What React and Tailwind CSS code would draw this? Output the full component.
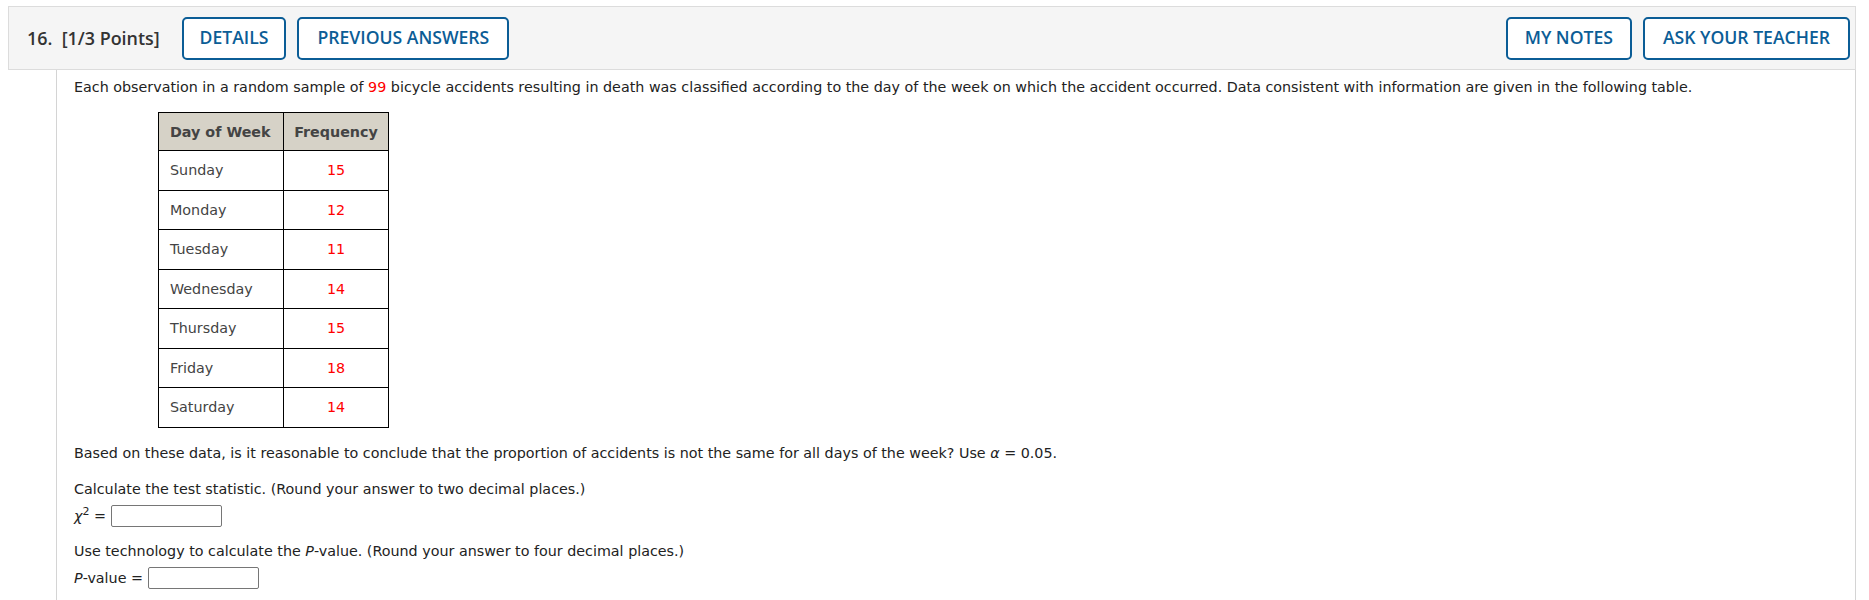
import React from "react";

const rows = [
  ["Sunday", 15],
  ["Monday", 12],
  ["Tuesday", 11],
  ["Wednesday", 14],
  ["Thursday", 15],
  ["Friday", 18],
  ["Saturday", 14],
];

const Btn = ({ children, className = "px-[18px]" }) => (
  <button className={`h-[43px] ${className} rounded-[5px] border-2 border-[#0b5d96] bg-white text-[#0b5d96] text-[17.6px] font-semibold leading-none`}>
    {children}
  </button>
);

export default function App() {
  return (
    <div className="min-h-screen flex flex-col bg-white pl-[8px] pr-[13px] pt-[6px] text-[#222]">
      {/* question header */}
      <div className="flex items-center h-[64px] border border-[#dcdcdc] bg-[#f5f5f5] pl-[18px] pr-[5px] font-['Open_Sans',sans-serif]">
        <span className="text-[17.9px] font-semibold text-[#333] mr-[22px]">
          16.&nbsp; [1/3 Points]
        </span>
        <div className="flex gap-[11px]">
          <Btn className="px-[16px]">DETAILS</Btn>
          <Btn>PREVIOUS ANSWERS</Btn>
        </div>
        <div className="ml-auto flex gap-[11px]">
          <Btn className="px-[17px]">MY NOTES</Btn>
          <Btn>ASK YOUR TEACHER</Btn>
        </div>
      </div>

      {/* question body */}
      <div className="flex-1 ml-[48px] border-l border-r border-[#d4d4d4] pl-[17px] pt-[7px] pb-[10px] font-['DejaVu_Sans',Verdana,sans-serif] text-[14.3px] leading-[20px] text-[#222]">
        <p>
          Each observation in a random sample of <span className="text-[#f00]">99</span> bicycle accidents resulting in death was classified according to the day of the week on which the accident occurred. Data consistent with information are given in the following table.
        </p>

        <table className="ml-[84px] mt-[15px] border-collapse border border-black">
          <thead>
            <tr className="bg-[#d6d2c7]">
              <th className="h-[38px] w-[125px] border border-black px-[11px] text-left font-bold text-[#444]">Day of Week</th>
              <th className="h-[38px] w-[105px] border border-black px-[8px] text-center font-bold text-[#444]">Frequency</th>
            </tr>
          </thead>
          <tbody>
            {rows.map(([day, n]) => (
              <tr key={day}>
                <td className="h-[39.5px] border border-black px-[11px] text-[#444]">{day}</td>
                <td className="h-[39.5px] border border-black text-center text-[#f00]">{n}</td>
              </tr>
            ))}
          </tbody>
        </table>

        <p className="mt-[15px]">
          Based on these data, is it reasonable to conclude that the proportion of accidents is not the same for all days of the week? Use <i>α</i> = 0.05.
        </p>

        <p className="mt-[16px]">
          Calculate the test statistic. (Round your answer to two decimal places.)
        </p>
        <div className="mt-[6px] flex items-center">
          <span>
            <i>χ</i>
            <sup className="text-[11px]">2</sup> =
          </span>
          <input type="text" className="ml-[5px] w-[111px] h-[22px] border border-[#767676] rounded-[2px] bg-white" />
        </div>

        <p className="mt-[14px]">
          Use technology to calculate the <i>P</i>-value. (Round your answer to four decimal places.)
        </p>
        <div className="mt-[6px] flex items-center">
          <span>
            <i>P</i>-value =
          </span>
          <input type="text" className="ml-[5px] w-[111px] h-[22px] border border-[#767676] rounded-[2px] bg-white" />
        </div>
      </div>
    </div>
  );
}
